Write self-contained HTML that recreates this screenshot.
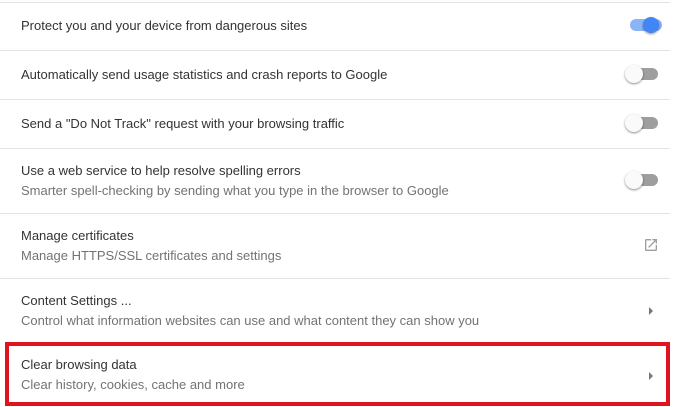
<!DOCTYPE html>
<html><head><style>
body{margin:0;width:681px;height:407px;background:#fff;font-family:"Liberation Sans",sans-serif;position:relative;overflow:hidden}
.l{position:absolute;left:0;width:670px;height:1px;background:#e4e4e4}
.t{position:absolute;left:21px;font-size:13px;color:#333;white-space:nowrap}
.s{color:#737373}
.tr{position:absolute;width:32px;height:12px;border-radius:6px;background:#9e9e9e}
.kn{position:absolute;width:18px;height:18px;border-radius:50%;background:#fafafa;box-shadow:0 1px 2px rgba(0,0,0,.45)}
.ar{position:absolute;width:0;height:0;border-top:4px solid transparent;border-bottom:4px solid transparent;border-left:4px solid #777}
</style></head><body>
<div class="l" style="top:2px"></div>
<div class="l" style="top:50px"></div>
<div class="l" style="top:99px"></div>
<div class="l" style="top:148px"></div>
<div class="l" style="top:213px"></div>
<div class="l" style="top:278px"></div>

<div class="t" style="top:18px">Protect you and your device from dangerous sites</div>
<div class="tr" style="left:630px;top:19px;background:#8ab4f8"></div>
<div class="kn" style="left:643px;top:17px;width:16px;height:16px;background:#4285f4"></div>

<div class="t" style="top:67px">Automatically send usage statistics and crash reports to Google</div>
<div class="tr" style="left:626px;top:68px"></div>
<div class="kn" style="left:625px;top:65px"></div>

<div class="t" style="top:116px">Send a "Do Not Track" request with your browsing traffic</div>
<div class="tr" style="left:626px;top:117px"></div>
<div class="kn" style="left:625px;top:114px"></div>

<div class="t" style="top:163px">Use a web service to help resolve spelling errors</div>
<div class="t s" style="top:183px">Smarter spell-checking by sending what you type in the browser to Google</div>
<div class="tr" style="left:626px;top:174px"></div>
<div class="kn" style="left:625px;top:171px"></div>

<div class="t" style="top:228px">Manage certificates</div>
<div class="t s" style="top:248px">Manage HTTPS/SSL certificates and settings</div>
<svg style="position:absolute;left:643px;top:237px" width="16" height="16" viewBox="0 0 24 24"><path fill="#9e9e9e" d="M19 19H5V5h7V3H5a2 2 0 0 0-2 2v14a2 2 0 0 0 2 2h14c1.1 0 2-.9 2-2v-7h-2v7zM14 3v2h3.59l-9.830 9.83 1.41 1.41L19 6.41V10h2V3h-7z"/></svg>

<div class="t" style="top:293px">Content Settings ...</div>
<div class="t s" style="top:313px">Control what information websites can use and what content they can show you</div>
<div class="ar" style="left:649px;top:307px"></div>

<div style="position:absolute;left:5px;top:342px;width:657px;height:56px;border:4px solid #e0141e"></div>
<div class="t" style="top:357px">Clear browsing data</div>
<div class="t s" style="top:377px">Clear history, cookies, cache and more</div>
<div class="ar" style="left:649px;top:372px"></div>
</body></html>
